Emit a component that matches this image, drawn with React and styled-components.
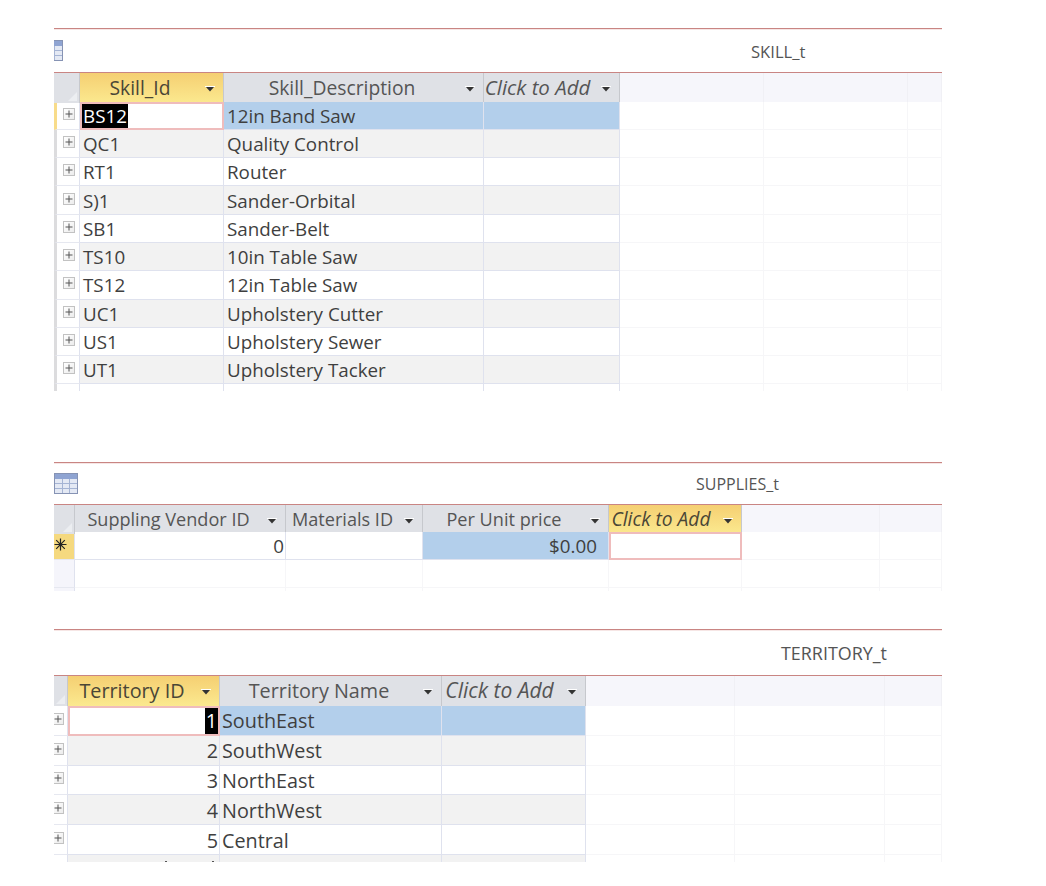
import React from 'react';
import styled, { createGlobalStyle } from 'styled-components';

const GlobalStyle = createGlobalStyle`
  html, body {
    margin: 0;
    padding: 0;
    background: #fff;
  }
  body {
    font-family: "Open Sans", "Noto Sans", "Liberation Sans", sans-serif;
    color: #444;
  }
`;

const Page = styled.div`
  width: 1046px;
  height: 886px;
  padding: 28px 0 0 54px;
  box-sizing: border-box;
  overflow: hidden;
`;

const Sheet = styled.section`
  width: 888px;
  margin-bottom: ${(p) => p.$gap}px;
`;

const TitleBar = styled.div`
  height: ${(p) => p.$height}px;
  box-sizing: border-box;
  display: flex;
  align-items: center;
  overflow: hidden;
  border-top: 1px solid #c98583;
  border-bottom: 1px solid #c98583;
  box-shadow: inset 0 1px 0 #f6e6e5;
`;

const IconSlot = styled.div`
  flex: none;
  width: ${(p) => p.$width}px;
  display: flex;
  justify-content: flex-end;
  overflow: hidden;
`;

const Title = styled.div`
  margin-left: ${(p) => p.$left}px;
  margin-top: 1px;
  font-size: ${(p) => p.$size}px;
  color: #555;
  white-space: nowrap;
`;

const Grid = styled.div`
  overflow: hidden;
  height: ${(p) => p.$height}px;
`;

const Row = styled.div`
  display: grid;
  grid-template-columns: ${(p) => p.$cols};
  height: ${(p) => p.$height}px;
  box-sizing: border-box;
  font-size: ${(p) => p.$size}px;
`;

const Corner = styled.div`
  position: relative;
  box-sizing: border-box;
  background: #dfe1e6;
  border-right: 1px solid #c6c8cd;

  &::after {
    content: '';
    position: absolute;
    right: 2px;
    bottom: 2px;
    border-style: solid;
    border-width: 0 0 9px 9px;
    border-color: transparent transparent #eceef1 transparent;
  }
`;

const HeaderCell = styled.div`
  display: flex;
  align-items: center;
  min-width: 0;
  padding: 0 ${(p) => (p.$italic ? 28 : 23)}px 2px 0;
  position: relative;
  box-sizing: border-box;
  border-right: 1px solid #c6c8cd;
  color: ${(p) => (p.$active ? '#4a4636' : '#555')};
  font-style: ${(p) => (p.$italic ? 'italic' : 'normal')};
  font-size: ${(p) => (p.$italic ? '1.06em' : '1em')};
  background: ${(p) =>
    p.$active ? 'linear-gradient(#f5cf72, #fbe98f)' : '#dfe1e6'};
`;

const HeaderLabel = styled.span`
  flex: 1;
  text-align: center;
  white-space: nowrap;
`;

const Arrow = styled.svg`
  position: absolute;
  right: 8px;
  top: 50%;
  margin-top: -2px;
  width: 10px;
  height: 6px;
`;

const EmptyHeader = styled.div`
  background: #f6f6fb;
  border-right: 1px solid #f0f0f5;
`;

const Selector = styled.div`
  box-sizing: border-box;
  display: flex;
  align-items: center;
  overflow: hidden;
  background: ${(p) => p.$bg};
  border-left: ${(p) => (p.$strip ? `3px solid ${p.$strip}` : '0')};
  border-right: 1px solid #dfe2ee;
  border-bottom: 1px solid #e6e8f0;
`;

const PlusBox = styled.span`
  flex: none;
  box-sizing: border-box;
  width: 12px;
  height: 12px;
  margin-left: ${(p) => p.$left}px;
  margin-bottom: 3px;
  border: 1px solid #c2c2c2;
  background: linear-gradient(135deg, #fff, #ececec);
  display: flex;
  align-items: center;
  justify-content: center;
`;

const Star = styled.svg`
  flex: none;
  width: 13px;
  height: 13px;
  margin-bottom: 3px;
`;

const Cell = styled.div`
  position: relative;
  box-sizing: border-box;
  display: flex;
  align-items: center;
  justify-content: ${(p) => (p.$right ? 'flex-end' : 'flex-start')};
  min-width: 0;
  padding: 1px 1px 0 ${(p) => p.$pad ?? 3}px;
  white-space: nowrap;
  color: #3f3f3f;
  background: ${(p) => (p.$selected ? '#b3cfeb' : p.$alt ? '#f2f2f2' : '#fff')};
  border-right: 1px solid #dfe2ee;
  border-bottom: 1px solid #dfe2ee;
  outline: ${(p) => (p.$current ? '2px solid #efbcbc' : 'none')};
  outline-offset: -2px;
`;

const Highlight = styled.span`
  align-self: stretch;
  display: flex;
  align-items: center;
  margin-left: ${(p) => (p.$flush ? 0 : -1)}px;
  padding: 0 1px;
  background: #000;
  color: #fff;
`;

const Price = styled.span`
  padding-right: 10px;
`;

const Speck = styled.span`
  position: absolute;
  top: 6px;
  left: ${(p) => p.$left}px;
  width: 2px;
  height: 2px;
  background: #555;
`;

const Filler = styled.div`
  box-sizing: border-box;
  background: #fff;
  border-right: 1px solid #f6f6f8;
  border-bottom: 1px solid #f6f6f8;
`;

function TableIcon() {
  return (
    <svg width="24" height="21" viewBox="0 0 24 21" style={{ flex: 'none' }}>
      <rect x="0.5" y="0.5" width="23" height="20" fill="#e4e9f4" stroke="#8693b4" />
      <rect x="1" y="1" width="22" height="5" fill="#8fa4d2" />
      <path
        d="M1 10.5h22M1 15.5h22M8.5 6v14M15.5 6v14"
        stroke="#a5b4d4"
        strokeWidth="1"
        fill="none"
      />
    </svg>
  );
}

function DropArrow() {
  return (
    <Arrow viewBox="0 0 10 6">
      <rect x="0" y="0" width="10" height="1" fill="#fff" />
      <polygon points="1,1 9,1 5,5.5" fill="#333" />
    </Arrow>
  );
}

function PlusMark() {
  return (
    <svg width="8" height="8" viewBox="0 0 8 8">
      <path d="M4 0.5v7M0.5 4h7" stroke="#555" strokeWidth="1" />
    </svg>
  );
}

function StarIcon() {
  return (
    <Star viewBox="0 0 13 13">
      <path
        d="M6.5 0.5v12M0.5 6.5h12M2.2 2.2l8.6 8.6M10.8 2.2l-8.6 8.6"
        stroke="#222"
        strokeWidth="1.2"
      />
    </Star>
  );
}

const skillRows = [
  ['BS12', '12in Band Saw'],
  ['QC1', 'Quality Control'],
  ['RT1', 'Router'],
  ['S)1', 'Sander-Orbital'],
  ['SB1', 'Sander-Belt'],
  ['TS10', '10in Table Saw'],
  ['TS12', '12in Table Saw'],
  ['UC1', 'Upholstery Cutter'],
  ['US1', 'Upholstery Sewer'],
  ['UT1', 'Upholstery Tacker'],
  ['', ''],
];

const territoryRows = [
  ['1', 'SouthEast'],
  ['2', 'SouthWest'],
  ['3', 'NorthEast'],
  ['4', 'NorthWest'],
  ['5', 'Central'],
  ['', ''],
];

const skillCols = '26px 144px 260px 136px 144px 144px 34px';
const supplyCols = '21px 211px 137px 186px 133px 138px 62px';
const territoryCols = '14px 152px 222px 144px 149px 150px 57px';

function SkillSheet() {
  return (
    <Sheet $gap={71}>
      <TitleBar $height={45}>
        <IconSlot $width={9}>
          <TableIcon />
        </IconSlot>
        <Title $left={688} $size={16.6}>SKILL_t</Title>
      </TitleBar>
      <Grid $height={318}>
        <Row $cols={skillCols} $height={28.5} $size={19.3}>
          <Corner />
          <HeaderCell $active>
            <HeaderLabel>Skill_Id</HeaderLabel>
            <DropArrow />
          </HeaderCell>
          <HeaderCell>
            <HeaderLabel>Skill_Description</HeaderLabel>
            <DropArrow />
          </HeaderCell>
          <HeaderCell $italic>
            <HeaderLabel>Click to Add</HeaderLabel>
            <DropArrow />
          </HeaderCell>
          <EmptyHeader />
          <EmptyHeader />
          <EmptyHeader />
        </Row>
        {skillRows.map(([id, desc], i) => {
          const alt = i % 2 === 1;
          const first = i === 0;
          return (
            <Row key={i} $cols={skillCols} $height={28.3} $size={18.8}>
              <Selector $bg="#fff" $strip={first ? '#f8dc8a' : '#dcdcde'}>
                {id && (
                  <PlusBox $left={6}>
                    <PlusMark />
                  </PlusBox>
                )}
              </Selector>
              <Cell $alt={alt} $current={first}>
                {first ? <Highlight>{id}</Highlight> : id}
              </Cell>
              <Cell $alt={alt} $selected={first}>
                {desc}
              </Cell>
              <Cell $alt={alt} $selected={first} />
              <Filler />
              <Filler />
              <Filler />
            </Row>
          );
        })}
      </Grid>
    </Sheet>
  );
}

function SuppliesSheet() {
  return (
    <Sheet $gap={38}>
      <TitleBar $height={43}>
        <IconSlot $width={24}>
          <TableIcon />
        </IconSlot>
        <Title $left={618} $size={16}>SUPPLIES_t</Title>
      </TitleBar>
      <Grid $height={86}>
        <Row $cols={supplyCols} $height={27} $size={18.1}>
          <Corner />
          <HeaderCell>
            <HeaderLabel>Suppling Vendor ID</HeaderLabel>
            <DropArrow />
          </HeaderCell>
          <HeaderCell>
            <HeaderLabel>Materials ID</HeaderLabel>
            <DropArrow />
          </HeaderCell>
          <HeaderCell>
            <HeaderLabel>Per Unit price</HeaderLabel>
            <DropArrow />
          </HeaderCell>
          <HeaderCell $active $italic>
            <HeaderLabel>Click to Add</HeaderLabel>
            <DropArrow />
          </HeaderCell>
          <EmptyHeader />
          <EmptyHeader />
        </Row>
        <Row $cols={supplyCols} $height={27.5} $size={18.8}>
          <Selector $bg="#f5d97f">
            <StarIcon />
          </Selector>
          <Cell $right>0</Cell>
          <Cell />
          <Cell $right $selected>
            <Price>$0.00</Price>
          </Cell>
          <Cell $current />
          <Filler />
          <Filler />
        </Row>
        <Row $cols={supplyCols} $height={28} $size={18.8}>
          <Selector $bg="#f5f5fb" />
          <Filler />
          <Filler />
          <Filler />
          <Filler />
          <Filler />
          <Filler />
        </Row>
        <Row $cols={supplyCols} $height={28} $size={18.8}>
          <Selector $bg="#f5f5fb" />
          <Filler />
          <Filler />
          <Filler />
          <Filler />
          <Filler />
          <Filler />
        </Row>
      </Grid>
    </Sheet>
  );
}

function TerritorySheet() {
  return (
    <Sheet $gap={0}>
      <TitleBar $height={47}>
        <Title $left={727} $size={17.9}>TERRITORY_t</Title>
      </TitleBar>
      <Grid $height={186}>
        <Row $cols={territoryCols} $height={30} $size={19.8}>
          <Corner />
          <HeaderCell $active>
            <HeaderLabel>Territory ID</HeaderLabel>
            <DropArrow />
          </HeaderCell>
          <HeaderCell>
            <HeaderLabel>Territory Name</HeaderLabel>
            <DropArrow />
          </HeaderCell>
          <HeaderCell $italic>
            <HeaderLabel>Click to Add</HeaderLabel>
            <DropArrow />
          </HeaderCell>
          <EmptyHeader />
          <EmptyHeader />
          <EmptyHeader />
        </Row>
        {territoryRows.map(([id, name], i) => {
          const alt = i % 2 === 1;
          const first = i === 0;
          const last = i === territoryRows.length - 1;
          return (
            <Row key={i} $cols={territoryCols} $height={29.8} $size={19.8}>
              <Selector $bg="#fff">
                {id && (
                  <PlusBox $left={-2}>
                    <PlusMark />
                  </PlusBox>
                )}
              </Selector>
              <Cell $right $alt={alt} $current={first}>
                {first ? <Highlight $flush>{id}</Highlight> : id}
                {last && <Speck $left={97} />}
                {last && <Speck $left={144} />}
              </Cell>
              <Cell $alt={alt} $selected={first} $pad={2}>
                {name}
              </Cell>
              <Cell $alt={alt} $selected={first} />
              <Filler />
              <Filler />
              <Filler />
            </Row>
          );
        })}
      </Grid>
    </Sheet>
  );
}

export default function App() {
  return (
    <>
      <GlobalStyle />
      <Page>
        <SkillSheet />
        <SuppliesSheet />
        <TerritorySheet />
      </Page>
    </>
  );
}
